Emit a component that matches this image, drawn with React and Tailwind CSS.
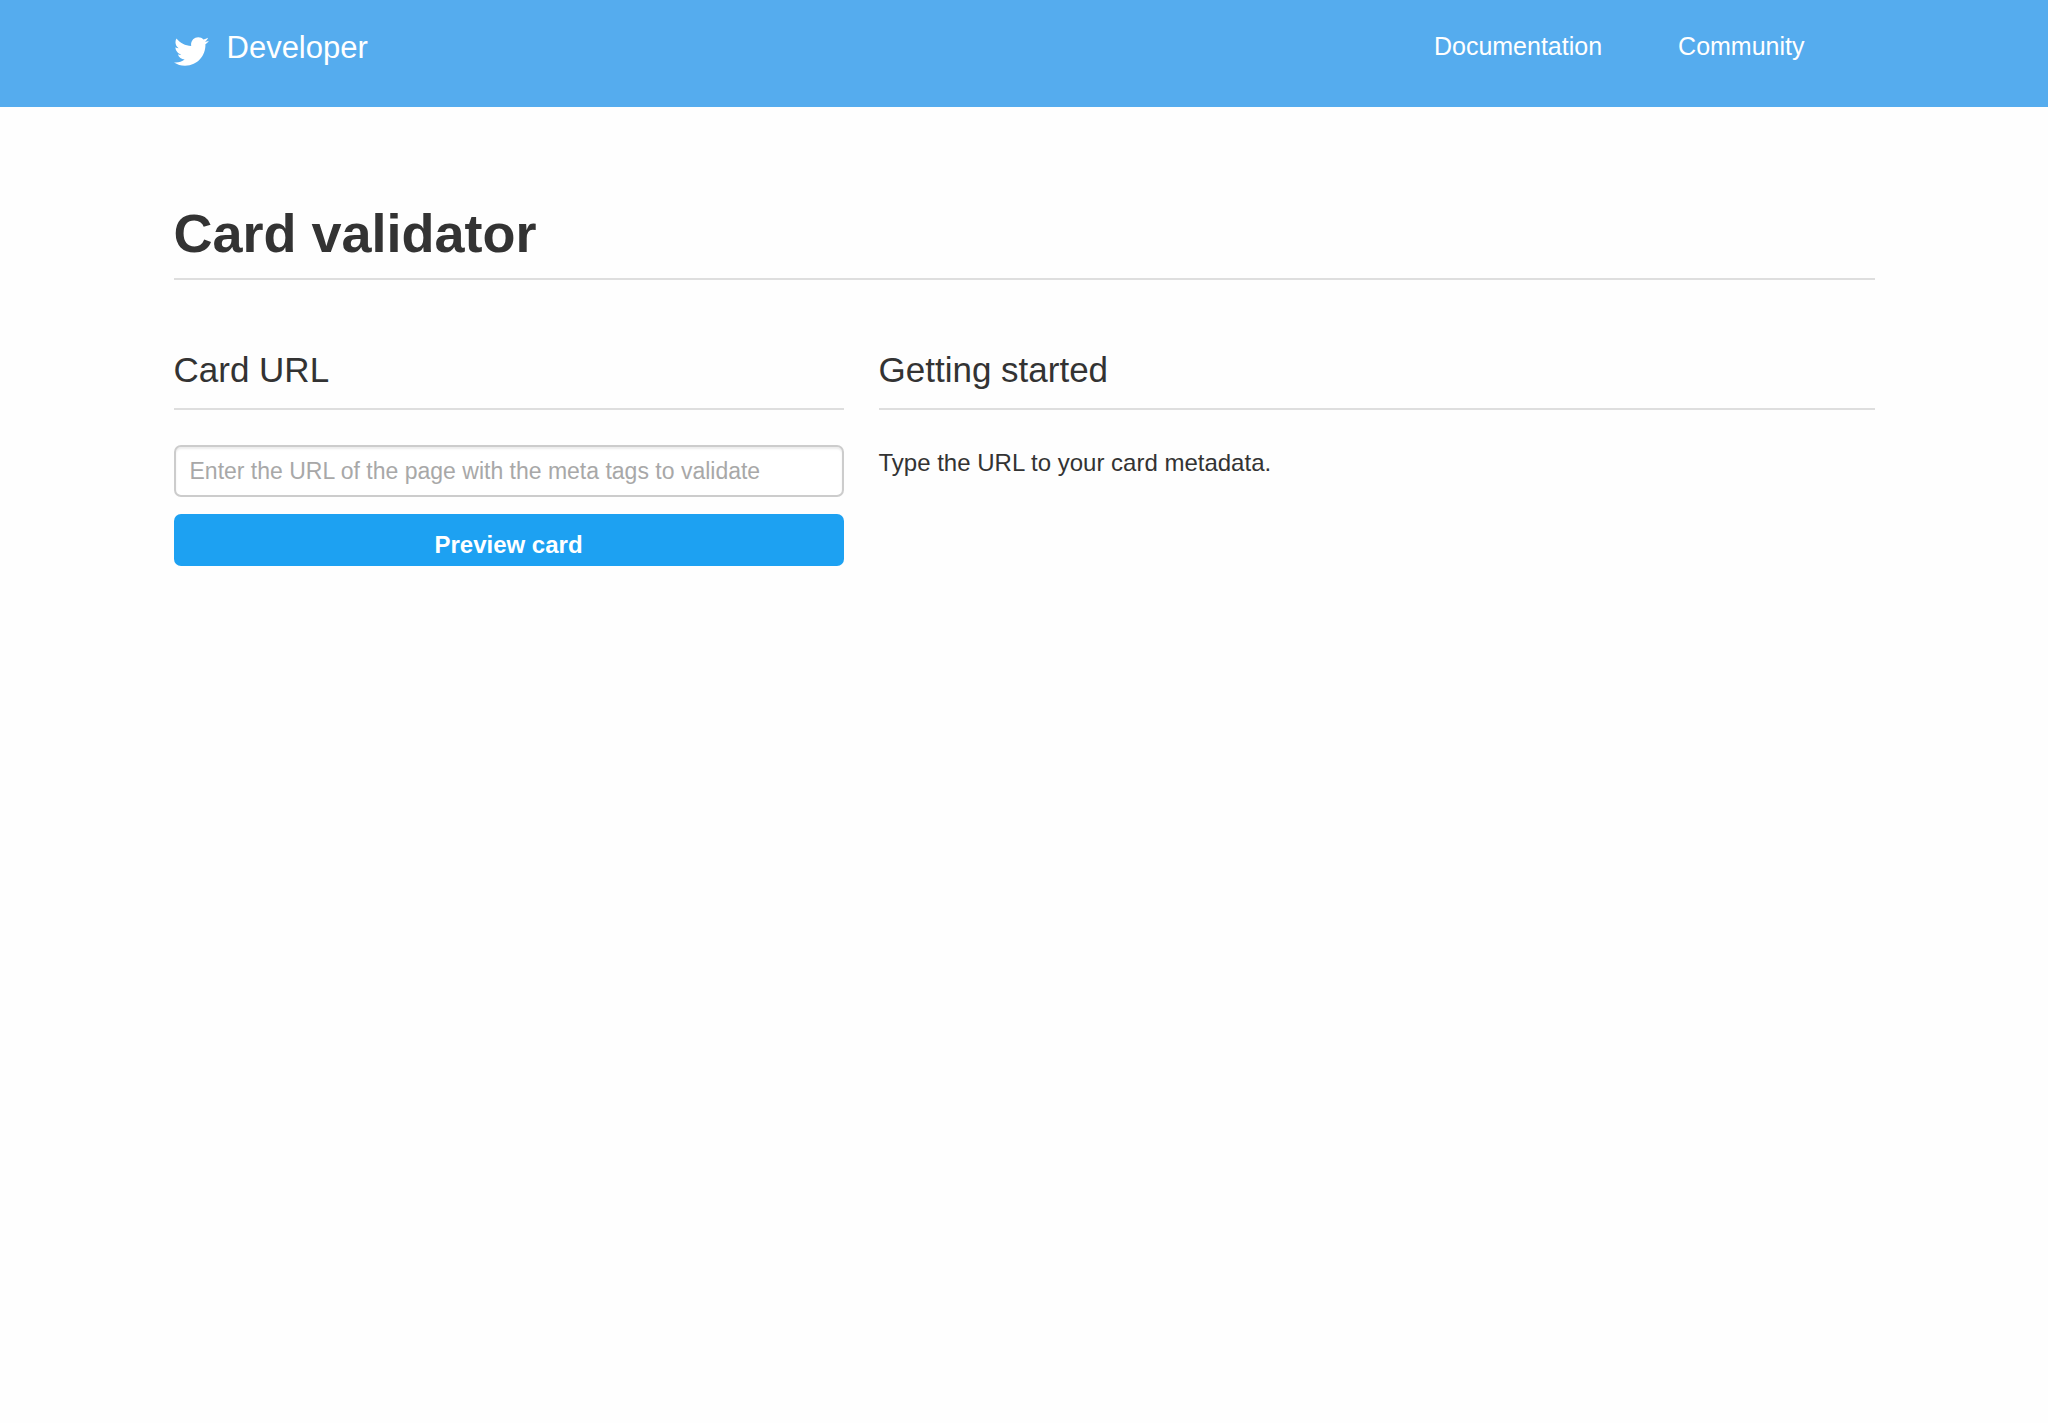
import React, { useState } from "react";
import { FaTwitter } from "react-icons/fa";

const navLinks = [
  { label: "Documentation", href: "#documentation" },
  { label: "Community", href: "#community" },
];

const Header = () => {
  return (
    <header className="bg-[#55acee] px-6 text-white">
      <div className="mx-auto flex max-w-[1701px] items-start justify-between pt-[26px] pb-[38px]">
        <a href="#home" className="flex items-center gap-[18px]">
          <FaTwitter className="mt-2 size-[35px]" aria-hidden="true" />
          <span className="text-[31px] leading-10">Developer</span>
        </a>
        <nav className="flex gap-[76px] pr-[70px]">
          {navLinks.map((link) => (
            <a key={link.label} href={link.href} className="text-[25px] leading-10">
              {link.label}
            </a>
          ))}
        </nav>
      </div>
    </header>
  );
};

const SectionTitle = ({ children, htmlFor }) => {
  return (
    <h2 className="mb-[35px] border-b-2 border-[#dedede] pb-[18px] text-[35px] leading-10">
      {htmlFor ? <label htmlFor={htmlFor}>{children}</label> : children}
    </h2>
  );
};

const App = () => {
  const [url, setUrl] = useState("");

  const handleSubmit = (event) => {
    event.preventDefault();
  };

  return (
    <div className="min-h-screen bg-[#fefefe] font-['Liberation_Sans',Arial,sans-serif] text-[#333]">
      <Header />
      <main className="px-6 pt-[95px]">
        <div className="mx-auto max-w-[1701px]">
          <h1 className="border-b-2 border-[#dedede] pb-[14px] text-[54px] leading-[62px] font-bold">
            Card validator
          </h1>
          <div className="mt-[70px] grid gap-[35px] lg:grid-cols-[670px_1fr]">
            <section>
              <SectionTitle htmlFor="card-url">Card URL</SectionTitle>
              <form onSubmit={handleSubmit}>
                <input
                  type="text"
                  id="card-url"
                  name="url"
                  className="block h-[52px] w-full rounded-[7px] border-2 border-[#ccc] bg-white px-[14px] text-[23px] shadow-[inset_0_2px_2px_rgba(0,0,0,0.08)] placeholder:text-[#a8a8a8]"
                  placeholder="Enter the URL of the page with the meta tags to validate"
                  value={url}
                  onChange={(e) => setUrl(e.target.value)}
                  autoComplete="off"
                />
                <button
                  type="submit"
                  className="mt-[17px] block h-[52px] w-full rounded-[7px] bg-[#1da1f2] pt-[10px] text-[24px] leading-9 font-bold text-white"
                >
                  Preview card
                </button>
              </form>
            </section>
            <section>
              <SectionTitle>Getting started</SectionTitle>
              <p className="text-[24px] leading-9">
                Type the URL to your card metadata.
              </p>
            </section>
          </div>
        </div>
      </main>
    </div>
  );
};

export default App;
